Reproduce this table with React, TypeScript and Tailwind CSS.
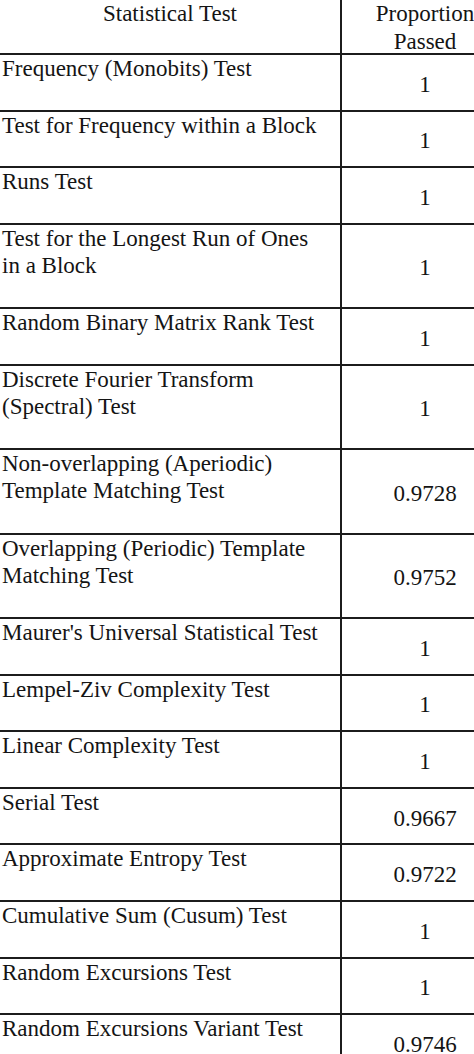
import React from "react";

type Row = { lines: string[]; value: string };

const rows: Row[] = [
  { lines: ["Frequency (Monobits) Test"], value: "1" },
  { lines: ["Test for Frequency within a Block"], value: "1" },
  { lines: ["Runs Test"], value: "1" },
  { lines: ["Test for the Longest Run of Ones", "in a Block"], value: "1" },
  { lines: ["Random Binary Matrix Rank Test"], value: "1" },
  { lines: ["Discrete Fourier Transform", "(Spectral) Test"], value: "1" },
  { lines: ["Non-overlapping (Aperiodic)", "Template Matching Test"], value: "0.9728" },
  { lines: ["Overlapping (Periodic) Template", "Matching Test"], value: "0.9752" },
  { lines: ["Maurer's Universal Statistical Test"], value: "1" },
  { lines: ["Lempel-Ziv Complexity Test"], value: "1" },
  { lines: ["Linear Complexity Test"], value: "1" },
  { lines: ["Serial Test"], value: "0.9667" },
  { lines: ["Approximate Entropy Test"], value: "0.9722" },
  { lines: ["Cumulative Sum (Cusum) Test"], value: "1" },
  { lines: ["Random Excursions Test"], value: "1" },
  { lines: ["Random Excursions Variant Test"], value: "0.9746" },
];

export default function App() {
  return (
    <div
      className="w-[474px] h-[1054px] overflow-hidden bg-white text-[#141414]"
      style={{ fontFamily: '"Liberation Serif", "Times New Roman", serif' }}
    >
      <div className="w-[508px] text-[23px] leading-[27px]">
        <div className="grid grid-cols-[342px_166px] h-[55px] border-b-2 border-[#1c1c1c]">
          <div className="border-r-2 border-[#1c1c1c] text-center">Statistical Test</div>
          <div className="text-center leading-[28px]">
            Proportion
            <br />
            Passed
          </div>
        </div>
        {rows.map((r, i) => (
          <div
            key={i}
            className={`grid grid-cols-[342px_166px] border-b-2 border-[#1c1c1c] ${
              r.lines.length > 1 ? "h-[84.4px]" : "h-[56.6px]"
            }`}
          >
            <div className="border-r-2 border-[#1c1c1c] pl-[2px] whitespace-nowrap">
              {r.lines.map((l, j) => (
                <div key={j}>{l}</div>
              ))}
            </div>
            <div className="flex items-center justify-center pt-1">{r.value}</div>
          </div>
        ))}
      </div>
    </div>
  );
}
